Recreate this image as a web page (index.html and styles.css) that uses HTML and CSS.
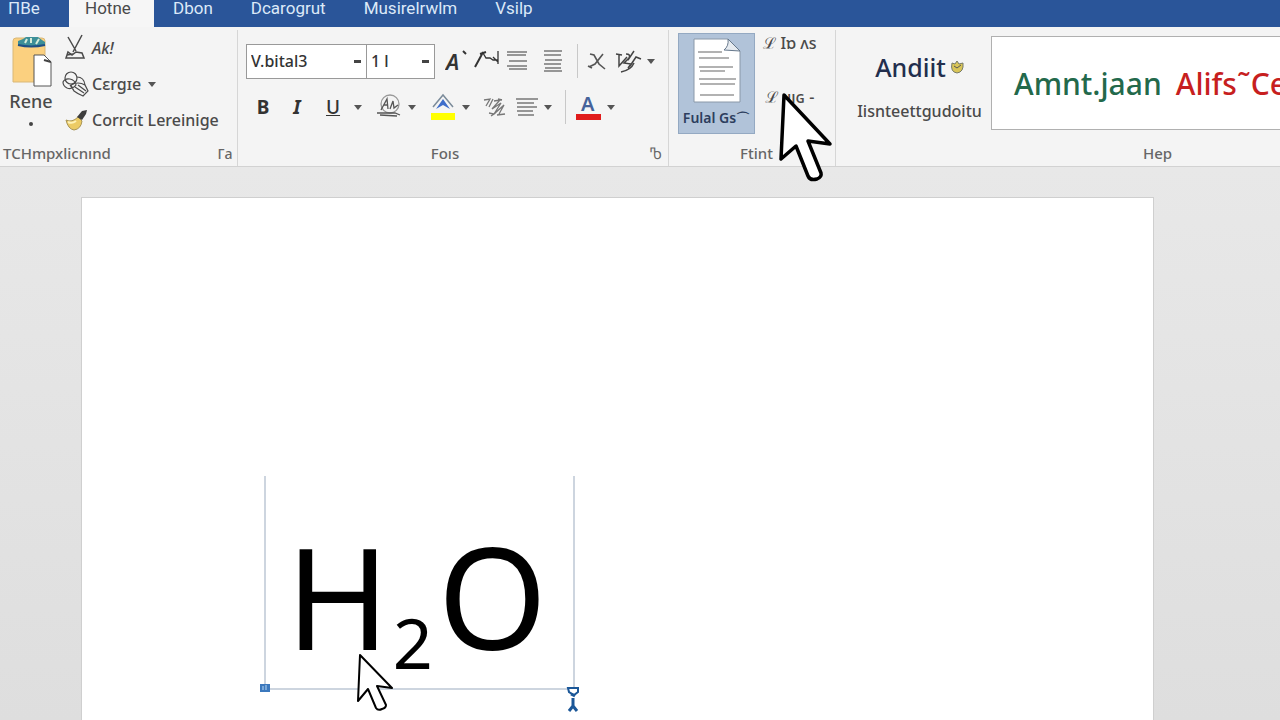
FILE: index.html
```html
<!DOCTYPE html>
<html lang="en">
<head>
    <meta charset="UTF-8">
    <meta name="viewport" content="width=device-width, initial-scale=1.0">
    <title>Document</title>
    <link rel="stylesheet" href="styles.css">
</head>
<body>
    <nav class="tabs">
        <a href="#" class="tab tab-file">ПBe</a>
        <a href="#" class="tab active">Hotne</a>
        <a href="#" class="tab">Dbon</a>
        <a href="#" class="tab">Dcarogrut</a>
        <a href="#" class="tab">Musirelrwlm</a>
        <a href="#" class="tab">Vsilp</a>
    </nav>

    <div class="ribbon">
        <section class="group clipboard">
            <div class="group-body">
                <button class="paste">
                    <svg width="42" height="52" viewBox="0 0 42 52">
                        <path d="M3 5q0-3 3-3h26q3 0 3 3v41H3z" fill="#fbd07f" stroke="#d9b878"/>
                        <path d="M8 9V5l5-2 3-2h12l4 3 3 2v3q-13 3-27 0z" fill="#3c8f98"/>
                        <path d="M8 9q13 3 27 0" fill="none" stroke="#1f4f86" stroke-width="2"/>
                        <path d="M15 7l2-4M21 7V2M26 8l3-5" stroke="#d6ecd9" stroke-width="2"/>
                        <path d="M24 19h10l7 7v24H24z" fill="#fff" stroke="#555"/>
                        <path d="M34 24l7 2" stroke="#444" stroke-width="2"/>
                    </svg>
                    <span>Rene</span>
                    <span class="dot"></span>
                </button>
                <div class="commands">
                    <button class="command">
                        <svg width="28" height="28" viewBox="0 0 28 28" fill="none" stroke="#4a4a4a" stroke-width="1.5">
                            <path d="M6 3l8 14M20 1l-9 17M6 18l-2 6h18l-2-5-6-1-4 3zM5 21l6-1"/>
                        </svg>
                        <i>Ak!</i>
                    </button>
                    <button class="command">
                        <svg width="28" height="28" viewBox="0 0 28 28" fill="none" stroke="#4a4a4a" stroke-width="1.2">
                            <circle cx="9" cy="8" r="6"/>
                            <path d="M1 12q2-4 7-3 5 1 6 6-4 5-9 3-4-2-4-6zM15 7q7 0 8 8M9 15q7-4 14 0l3 6-5 5q-5-2-9-5zM13 17l9 6M16 15l8 6M8 15l4 6"/>
                        </svg>
                        Cɛrgɪe <span class="caret"></span>
                    </button>
                    <button class="command">
                        <svg width="28" height="28" viewBox="0 0 28 28">
                            <path d="M4 14q6 3 12-3l4 4q-1 8-8 9-6-1-8-10z" fill="#eccb64" stroke="#a89455"/>
                            <path d="M15 11l5-6 5-1-1 4-4 6z" fill="#3d3d3d"/>
                            <path d="M6 16q4 2 8-1" fill="none" stroke="#fff3b8" stroke-width="2"/>
                        </svg>
                        Corrcit Lereinige
                    </button>
                </div>
            </div>
            <div class="group-label"><span>TCHmpxlicnınd</span><button class="launcher">Γa</button></div>
        </section>

        <section class="group font">
            <div class="group-body rows">
                <div class="row">
                    <select class="family" aria-label="Font"><option>V.bital3</option></select>
                    <select class="size" aria-label="Font size"><option>1 l</option></select>
                    <button class="tool grow">
                        <svg width="24" height="28" viewBox="0 0 24 28">
                            <text x="1" y="23" class="glyph-a">A</text>
                            <path d="M18 4l3 3" stroke="#333" stroke-width="2"/>
                        </svg>
                    </button>
                    <button class="tool">
                        <svg width="28" height="28" viewBox="0 0 28 28" fill="none" stroke="#333">
                            <path d="M2 20l6-11 2-4M7 7l6-2" stroke-width="2"/>
                            <path d="M10 6l3 5h4l3 2h5M25 4v13M20 10l5 5" stroke-width="1.3"/>
                        </svg>
                    </button>
                    <button class="tool">
                        <svg width="24" height="24" viewBox="0 0 24 24" stroke="#777" stroke-width="1.5">
                            <path d="M2 3h20M2 6h19M4 12h18M2 17h20M4 20h18"/>
                        </svg>
                    </button>
                    <button class="tool justify">
                        <svg width="24" height="24" viewBox="0 0 24 24" stroke="#777" stroke-width="1.5">
                            <path d="M3 2h18M3 6h17M4 11h17M3 15h17M4 19h16M3 22h18"/>
                        </svg>
                    </button>
                    <span class="rule"></span>
                    <button class="tool">
                        <svg width="28" height="24" viewBox="0 0 28 24" fill="none" stroke="#555" stroke-width="1.6">
                            <path d="M8 5l4 1 5 9 6 5M21 5l-8 10-6 3M6 17l4 2"/>
                        </svg>
                    </button>
                    <button class="tool">
                        <svg width="28" height="28" viewBox="0 0 28 28" fill="none" stroke="#444" stroke-width="1.5">
                            <path d="M2 7l6 1M5 8v11l8-9M12 7q5 0 3 4l-5 5 7 1-3 4M20 4l-6 9M20 16q-3 7-13 9M16 19l6-9 5 2"/>
                        </svg>
                        <span class="caret"></span>
                    </button>
                </div>
                <div class="row tools">
                    <button class="tool letter"><b>B</b></button>
                    <button class="tool letter"><b><i>I</i></b></button>
                    <button class="tool letter underline"><u>U</u><span class="caret"></span></button>
                    <button class="tool">
                        <svg width="28" height="28" viewBox="0 0 28 28" fill="none" stroke="#555" stroke-width="1.3">
                            <circle cx="15" cy="11" r="9" stroke="#999"/>
                            <path d="M6 17l6-11 1 10M9 12h4M15 16l3-8 1 7 4-3M2 20h18l5 2M5 22l17 1"/>
                        </svg>
                        <span class="caret"></span>
                    </button>
                    <button class="tool">
                        <svg width="28" height="28" viewBox="0 0 28 28">
                            <path d="M4 14L14 2l10 12" fill="none" stroke="#7b8b9a" stroke-width="1.5"/>
                            <path d="M7 16l7-10 7 10-7-4z" fill="#3e6dca"/>
                            <path d="M2 20h24v7H2z" fill="#ff0"/>
                        </svg>
                        <span class="caret"></span>
                    </button>
                    <button class="tool">
                        <svg width="24" height="24" viewBox="0 0 24 24" fill="none" stroke="#777" stroke-width="1.3">
                            <path d="M1 5l6-1-4 7M10 4L6 12M11 6l6-1-8 9 9-6-7 11 10-9-5 9M6 18l5 1-3 2M14 20l8-1M15 4l4 1"/>
                        </svg>
                    </button>
                    <button class="tool">
                        <svg width="24" height="24" viewBox="0 0 24 24" stroke="#777" stroke-width="1.5">
                            <path d="M1 4h22M2 8h17M2 12h20M2 16h16M3 20h16"/>
                        </svg>
                        <span class="caret"></span>
                    </button>
                    <span class="rule"></span>
                    <button class="tool">
                        <svg width="28" height="28" viewBox="0 0 28 28">
                            <text x="7" y="18" class="glyph-color">A</text>
                            <path d="M2 21h25v6H2z" fill="#e01b1b"/>
                        </svg>
                        <span class="caret"></span>
                    </button>
                </div>
            </div>
            <div class="group-label"><span>Foıs</span><button class="launcher">Ⴊ</button></div>
        </section>

        <section class="group print">
            <div class="group-body">
                <button class="big">
                    <svg width="50" height="66" viewBox="0 0 50 66">
                        <path d="M2 1h34l12 12v51H2z" fill="#fff" stroke="#8a98a8"/>
                        <path d="M36 1q1 7-4 11l16 1z" fill="#e6ebf0" stroke="#66788c"/>
                        <path d="M6 14h24M7 20h30M7 29h34M8 33h25M7 41h37M8 46h35M8 57h34" stroke="#999" stroke-width="1.3"/>
                    </svg>
                    <span>Fulal Gs⌒</span>
                </button>
                <div class="side">
                    <button><i>ℒ</i> Iɒ ʌs</button>
                    <button><i>ℒ</i> ıııɢ -</button>
                </div>
            </div>
            <div class="group-label"><span>Ftint</span></div>
        </section>

        <section class="group styles">
            <div class="group-body">
                <div class="theme">
                    <button class="theme-name">Andiit
                        <svg width="14" height="14" viewBox="0 0 14 14">
                            <path d="M2 3l3 1 2-3 2 3 4-1q1 9-6 10Q0 12 2 3z" fill="#d9c557" stroke="#777b68"/>
                            <path d="M4 6l3 2 4-3" fill="none" stroke="#555"/>
                        </svg>
                    </button>
                    <span class="theme-note">Iisnteettgudoitu</span>
                </div>
                <div class="gallery">
                    <button class="green">Amnt.jaan</button>
                    <button class="red">Alifs˜Ce</button>
                </div>
            </div>
            <div class="group-label"><span>Hep</span></div>
        </section>

        <svg class="pointer" width="54" height="92" viewBox="0 0 54 92">
            <path d="M5 3l46 49-22-3 13 32q1 4-4 6-7 2-9-3L17 54 2 67z" fill="#fff" stroke="#000" stroke-width="3.5" stroke-linejoin="round"/>
        </svg>
    </div>

    <main class="workspace">
        <div class="page">
            <div class="text-box">
                <span class="formula">H<sub>2</sub>O</span>
                <svg class="handle" width="12" height="10" viewBox="0 0 12 10">
                    <path d="M1 1h10v8H1z" fill="#3b78bd"/>
                    <path d="M4 3v4M7 2v5" stroke="#b8d7f2"/>
                </svg>
                <svg class="anchor" width="16" height="28" viewBox="0 0 16 28">
                    <path d="M3 2h10v4l-4 3-5-3z" fill="#fff" stroke="#1b5798" stroke-width="2"/>
                    <path d="M6 8l4 2M8 12v9M4 25l4-5 4 5" fill="none" stroke="#1b5798" stroke-width="3"/>
                </svg>
                <svg class="pointer-small" width="38" height="62" viewBox="0 0 38 62">
                    <path d="M3 3l32 33-15-2 9 19q0 3-4 4-4 2-6-1l-8-19L1 49z" fill="#fff" stroke="#000" stroke-width="2" stroke-linejoin="round"/>
                </svg>
            </div>
        </div>
    </main>
</body>
</html>
```

FILE: styles.css
```css
* {
    box-sizing: border-box;
}
body {
    font-family: "Noto Sans", sans-serif;
    font-size: 16px;
    font-weight: 500;
    margin: 0;
    min-height: 100vh;
    display: flex;
    flex-direction: column;
    overflow: hidden;
    background-color: #e5e5e5;
    color: #4a4a4a;
}
button {
    font: inherit;
    color: inherit;
    background: none;
    border: none;
    padding: 0;
    white-space: nowrap;
}
svg {
    display: block;
    flex: none;
}
.tabs {
    display: flex;
    height: 27px;
    background-color: #2a5599;
}
.tab {
    padding: 0 19px;
    height: 27px;
    line-height: 16px;
    font-family: Roboto, sans-serif;
    font-size: 17px;
    font-weight: 400;
    color: #dce9f8;
    text-decoration: none;
}
.tab-file {
    width: 69px;
    padding: 0 8px;
}
.tab.active {
    width: 85px;
    background-color: #f6f6f6;
    color: #4a4a4a;
    padding: 0 16px;
}
.ribbon {
    position: relative;
    display: flex;
    height: 140px;
    padding-top: 3px;
    background-color: #f4f4f4;
    border-bottom: 1px solid #d2d2d2;
}
.group {
    flex: none;
    display: flex;
    flex-direction: column;
    border-right: 1px solid #d6d6d6;
}
.group-body {
    display: flex;
    height: 112px;
}
.group-label {
    display: flex;
    align-items: center;
    height: 22px;
    font-size: 15px;
    color: #666;
}
.group-label span {
    flex: 1;
    text-align: center;
}
.launcher {
    width: 24px;
    font-size: 14px;
}
.clipboard {
    width: 238px;
}
.clipboard .group-label span {
    text-align: left;
    padding-left: 3px;
}
.paste {
    width: 62px;
    padding-top: 6px;
    display: flex;
    flex-direction: column;
    align-items: center;
    line-height: 26px;
    font-size: 18px;
}
.dot {
    width: 4px;
    height: 4px;
    margin-top: 8px;
    border-radius: 50%;
    background-color: #444;
}
.command {
    display: flex;
    align-items: center;
    gap: 2px;
    height: 36px;
}
.caret {
    border: 4px solid transparent;
    border-top: 5px solid #555;
    border-bottom: none;
    margin: 0 5px;
}
.font {
    width: 431px;
    padding-left: 8px;
}
.rows {
    flex-direction: column;
    padding-top: 8px;
}
.row {
    display: flex;
    align-items: center;
    height: 46px;
    gap: 4px;
}
.tools {
    gap: 8px;
    padding-left: 4px;
}
select {
    appearance: none;
    height: 35px;
    padding: 0 4px;
    border: 1px solid #999;
    border-radius: 0;
    font: inherit;
    color: #333;
    background: #fff linear-gradient(#444, #444) no-repeat right 5px center / 7px 3px;
}
.family {
    width: 121px;
    margin-right: -5px;
}
.size {
    width: 69px;
}
.tool {
    display: flex;
    align-items: center;
}
.grow {
    margin-left: 6px;
}
.justify {
    margin: 0 8px;
}
.letter {
    min-width: 26px;
    justify-content: center;
    font-size: 19px;
    color: #333;
}
.underline {
    padding-left: 8px;
}
.underline .caret {
    margin-left: 14px;
}
.rule {
    width: 1px;
    height: 34px;
    background-color: #c8c8c8;
}
.glyph-a {
    font-size: 22px;
    font-weight: 600;
    font-style: italic;
    fill: #333;
}
.glyph-color {
    font-size: 20px;
    font-weight: 600;
    fill: #45629a;
}
.print {
    width: 167px;
    padding-left: 9px;
}
.big {
    width: 77px;
    height: 101px;
    margin-top: 3px;
    display: flex;
    flex-direction: column;
    align-items: center;
    padding-top: 4px;
    background-color: #b1c3d9;
    border: 1px solid #94a9c2;
    color: #2d3e5e;
    font-size: 14px;
    font-weight: 600;
    line-height: 28px;
}
.side {
    display: flex;
    flex-direction: column;
    gap: 32px;
    padding: 2px 8px;
}
.styles {
    width: 644px;
}
.theme {
    width: 155px;
    display: flex;
    flex-direction: column;
    align-items: center;
    padding: 20px 8px 0 20px;
}
.theme-name {
    display: flex;
    align-items: center;
    gap: 4px;
    font-size: 25px;
    color: #222e4d;
}
.theme-note {
    margin-top: 16px;
}
.gallery {
    flex: 1;
    display: flex;
    align-items: center;
    gap: 14px;
    height: 94px;
    margin-top: 6px;
    padding-left: 22px;
    background-color: #fff;
    border: 1px solid #b0b0b0;
    font-size: 30px;
}
.green {
    color: #23694b;
}
.red {
    color: #c71f1f;
}
.pointer {
    position: absolute;
    left: 779px;
    top: 65px;
    z-index: 1;
}
.workspace {
    flex: 1;
    display: flex;
    padding: 30px 126px 0 81px;
    background: linear-gradient(#e8e8e8, #dedede);
}
.page {
    flex: 1;
    padding: 278px 182px 0;
    background-color: #fff;
    border: 1px solid #cfcfcf;
    border-bottom: none;
}
.text-box {
    position: relative;
    width: 311px;
    height: 214px;
    padding: 25px 0 0 20px;
    border: 2px solid #cdd5df;
    border-top: none;
}
.formula {
    font-size: 140px;
    font-weight: 400;
    line-height: 190px;
    color: #000;
    white-space: nowrap;
}
.formula sub {
    font-size: 70px;
    line-height: 0;
    vertical-align: -19px;
    margin: 0 5px 0 3px;
}
.handle {
    position: absolute;
    left: -7px;
    bottom: -5px;
}
.anchor {
    position: absolute;
    right: -8px;
    bottom: -26px;
}
.pointer-small {
    position: absolute;
    left: 91px;
    top: 176px;
}
```
